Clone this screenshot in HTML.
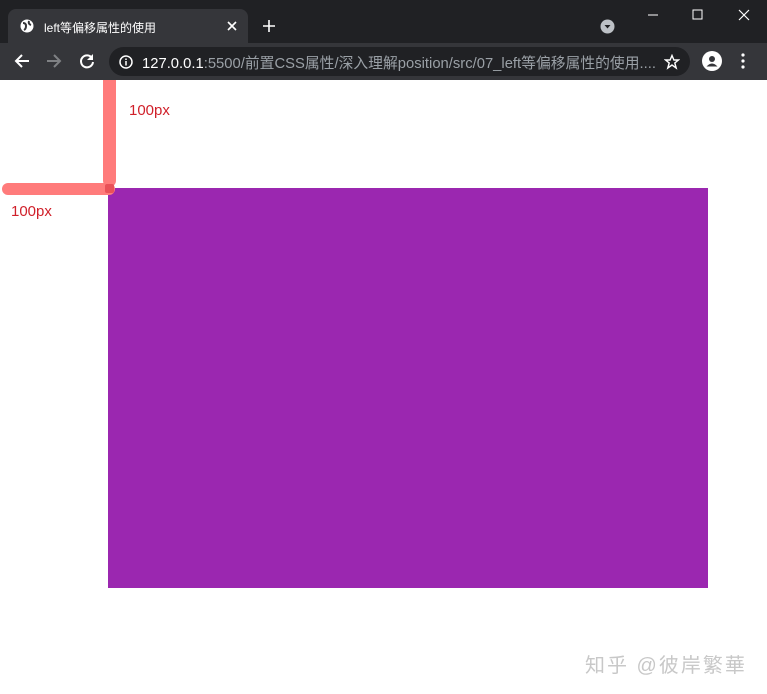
<!DOCTYPE html>
<html><head><meta charset="utf-8"><style>
*{margin:0;padding:0;box-sizing:border-box}
body{width:767px;height:694px;background:#fff;position:relative;overflow:hidden;font-family:"Liberation Sans","Noto Sans CJK SC",sans-serif}
.top{position:absolute;left:0;top:0;width:767px;height:43px;background:#202124}
.tab{position:absolute;left:8px;top:9px;width:240px;height:34px;background:#35363a;border-radius:8px 8px 0 0}
.tab .t{position:absolute;left:36px;top:10px;color:#fff;font-size:12px}
.bar{position:absolute;left:0;top:43px;width:767px;height:37px;background:#35363a}
.url{position:absolute;left:109px;top:4px;width:581px;height:29px;background:#202124;border-radius:15px}
.url .u{position:absolute;left:33px;top:5px;font-size:14.8px;color:#9aa0a6;white-space:nowrap}
.url .u b{color:#fff;font-weight:normal}
.ic{position:absolute}
.v{position:absolute;left:103px;top:80px;width:13px;height:107px;background:#ff7b7b;border-radius:0 0 7px 7px}
.h{position:absolute;left:2px;top:183px;width:113px;height:12px;background:#ff7b7b;border-radius:6px}
.p{position:absolute;left:108px;top:188px;width:600px;height:400px;background:#9b27b0}
.l{position:absolute;color:#d0202a;font-size:15px}
.wm{position:absolute;left:585px;top:649px;color:#c8c8c8;font-size:20px;letter-spacing:2px}
</style></head><body>
<div class="top">
 <div class="tab">
  <svg class="ic" style="left:12px;top:10px" width="14" height="14" viewBox="0 0 14 14"><circle cx="7" cy="7" r="6.5" fill="#fff"/><path d="M3 4q3 0 3 3t-2 4M9 2q-1 3 2 4" stroke="#35363a" stroke-width="2" fill="none"/></svg>
  <div class="t">left等偏移属性的使用</div>
  <svg class="ic" style="left:219px;top:12px" width="10" height="10"><path d="M1 1L9 9M9 1L1 9" stroke="#fff" stroke-width="1.6"/></svg>
 </div>
 <svg class="ic" style="left:262px;top:19px" width="14" height="14"><path d="M7 1V13M1 7H13" stroke="#fff" stroke-width="1.6"/></svg>
 <svg class="ic" style="left:600px;top:19px" width="15" height="15"><circle cx="7.5" cy="7.5" r="7" fill="#bdc1c6"/><path d="M4.5 6L7.5 9.5L10.5 6Z" fill="#202124"/></svg>
 <svg class="ic" style="left:647px;top:8px" width="12" height="12"><path d="M1 7H11" stroke="#fff"/></svg>
 <svg class="ic" style="left:692px;top:9px" width="12" height="12"><rect x="1" y="1" width="9" height="9" fill="none" stroke="#fff"/></svg>
 <svg class="ic" style="left:738px;top:9px" width="12" height="12"><path d="M1 1L11 11M11 1L1 11" stroke="#fff" stroke-width="1.2"/></svg>
</div>
<div class="bar">
 <svg class="ic" style="left:13px;top:10px" width="18" height="16"><path d="M16 8H3M9 2L3 8L9 14" stroke="#fff" stroke-width="2" fill="none"/></svg>
 <svg class="ic" style="left:45px;top:10px" width="18" height="16"><path d="M2 8H15M9 2L15 8L9 14" stroke="#7f8184" stroke-width="2" fill="none"/></svg>
 <svg class="ic" style="left:78px;top:9px" width="18" height="18"><path d="M14 6A6 6 0 1 0 15 10" stroke="#fff" stroke-width="2" fill="none"/><path d="M15 2V8H9Z" fill="#fff"/></svg>
 <div class="url">
  <svg class="ic" style="left:10px;top:8px" width="14" height="14"><circle cx="7" cy="7" r="6" fill="none" stroke="#fff" stroke-width="1.5"/><path d="M7 6V10.5M7 3.5V5" stroke="#fff" stroke-width="1.5"/></svg>
  <div class="u"><b>127.0.0.1</b>:5500/前置CSS属性/深入理解position/src/07_left等偏移属性的使用....</div>
  <svg class="ic" style="left:555px;top:7px" width="16" height="16"><path d="M8 1.5L9.9 6H14.5L10.8 9L12.2 14L8 11L3.8 14L5.2 9L1.5 6H6.1Z" fill="none" stroke="#fff" stroke-width="1.4"/></svg>
 </div>
 <svg class="ic" style="left:702px;top:8px" width="20" height="20"><circle cx="10" cy="10" r="10" fill="#fff"/><circle cx="10" cy="8" r="3" fill="#35363a"/><path d="M4.5 15.5Q10 9.5 15.5 15.5Z" fill="#35363a"/></svg>
 <svg class="ic" style="left:741px;top:10px" width="4" height="16"><circle cx="2" cy="2" r="1.6" fill="#fff"/><circle cx="2" cy="8" r="1.6" fill="#fff"/><circle cx="2" cy="14" r="1.6" fill="#fff"/></svg>
</div>
<div class="p"></div>
<div class="v"></div>
<div class="h"></div>
<div style="position:absolute;left:105px;top:184px;width:9px;height:9px;background:#e0404a;border-radius:2px;opacity:.7"></div>
<div class="l" style="left:129px;top:102px">100px</div>
<div class="l" style="left:11px;top:203px">100px</div>
<div class="wm">知乎 @彼岸繁華</div>
</body></html>
